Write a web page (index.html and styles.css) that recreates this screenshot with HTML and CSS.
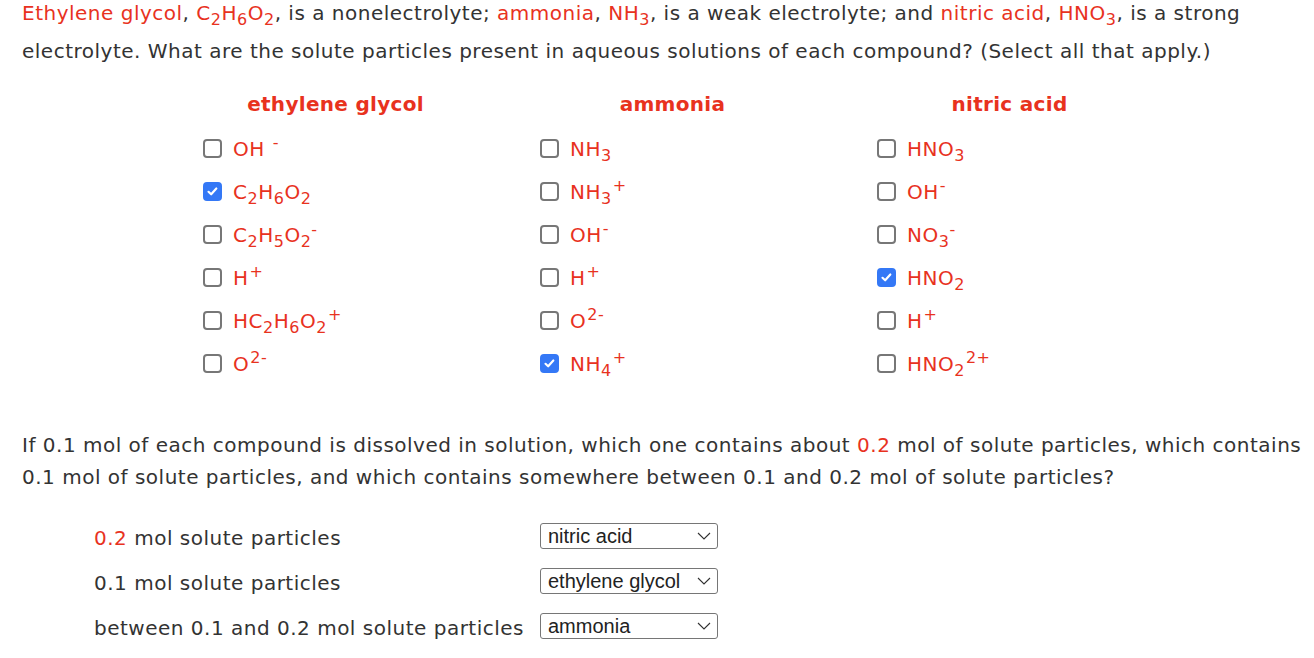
FILE: index.html
```html
<!DOCTYPE html>
<html>
<head>
<meta charset="utf-8">
<link rel="stylesheet" href="styles.css">
</head>
<body>
<p class="intro"><span class="red">Ethylene glycol</span>, <span class="red">C<sub>2</sub>H<sub>6</sub>O<sub>2</sub></span>, is a nonelectrolyte; <span class="red">ammonia</span>, <span class="red">NH<sub>3</sub></span>, is a weak electrolyte; and <span class="red">nitric acid</span>, <span class="red">HNO<sub>3</sub></span>, is a strong<br>electrolyte. What are the solute particles present in aqueous solutions of each compound? (Select all that apply.)</p>

<div class="columns">
  <div class="col">
    <div class="col-head">ethylene glycol</div>
    <div class="item"><span class="cb"></span><span class="label">OH <sup>-</sup></span></div>
    <div class="item"><span class="cb checked"><svg viewBox="0 0 18 18"><path d="M4.2 9.4 L7.4 12.4 L13.6 5.4" fill="none" stroke="#fff" stroke-width="2.6" stroke-linecap="round" stroke-linejoin="round"/></svg></span><span class="label">C<sub>2</sub>H<sub>6</sub>O<sub>2</sub></span></div>
    <div class="item"><span class="cb"></span><span class="label">C<sub>2</sub>H<sub>5</sub>O<sub>2</sub><sup class="tight">-</sup></span></div>
    <div class="item"><span class="cb"></span><span class="label">H<sup>+</sup></span></div>
    <div class="item"><span class="cb"></span><span class="label">HC<sub>2</sub>H<sub>6</sub>O<sub>2</sub><sup>+</sup></span></div>
    <div class="item"><span class="cb"></span><span class="label">O<sup>2-</sup></span></div>
  </div>
  <div class="col">
    <div class="col-head">ammonia</div>
    <div class="item"><span class="cb"></span><span class="label">NH<sub>3</sub></span></div>
    <div class="item"><span class="cb"></span><span class="label">NH<sub>3</sub><sup>+</sup></span></div>
    <div class="item"><span class="cb"></span><span class="label">OH<sup>-</sup></span></div>
    <div class="item"><span class="cb"></span><span class="label">H<sup>+</sup></span></div>
    <div class="item"><span class="cb"></span><span class="label">O<sup>2-</sup></span></div>
    <div class="item"><span class="cb checked"><svg viewBox="0 0 18 18"><path d="M4.2 9.4 L7.4 12.4 L13.6 5.4" fill="none" stroke="#fff" stroke-width="2.6" stroke-linecap="round" stroke-linejoin="round"/></svg></span><span class="label">NH<sub>4</sub><sup>+</sup></span></div>
  </div>
  <div class="col">
    <div class="col-head">nitric acid</div>
    <div class="item"><span class="cb"></span><span class="label">HNO<sub>3</sub></span></div>
    <div class="item"><span class="cb"></span><span class="label">OH<sup>-</sup></span></div>
    <div class="item"><span class="cb"></span><span class="label">NO<sub>3</sub><sup class="tight">-</sup></span></div>
    <div class="item"><span class="cb checked"><svg viewBox="0 0 18 18"><path d="M4.2 9.4 L7.4 12.4 L13.6 5.4" fill="none" stroke="#fff" stroke-width="2.6" stroke-linecap="round" stroke-linejoin="round"/></svg></span><span class="label">HNO<sub>2</sub></span></div>
    <div class="item"><span class="cb"></span><span class="label">H<sup>+</sup></span></div>
    <div class="item"><span class="cb"></span><span class="label">HNO<sub>2</sub><sup>2+</sup></span></div>
  </div>
</div>

<p class="question">If 0.1 mol of each compound is dissolved in solution, which one contains about <span class="red">0.2</span> mol of solute particles, which contains<br>0.1 mol of solute particles, and which contains somewhere between 0.1 and 0.2 mol of solute particles?</p>

<div class="answers">
  <div class="ans-label"><span class="red">0.2</span> mol solute particles</div>
  <div class="sel"><span class="sel-text">nitric acid</span><svg class="chev" viewBox="0 0 14 8"><path d="M1 1 L7 7 L13 1" fill="none" stroke="#333" stroke-width="1.1"/></svg></div>
  <div class="ans-label">0.1 mol solute particles</div>
  <div class="sel"><span class="sel-text">ethylene glycol</span><svg class="chev" viewBox="0 0 14 8"><path d="M1 1 L7 7 L13 1" fill="none" stroke="#333" stroke-width="1.1"/></svg></div>
  <div class="ans-label">between 0.1 and 0.2 mol solute particles</div>
  <div class="sel"><span class="sel-text">ammonia</span><svg class="chev" viewBox="0 0 14 8"><path d="M1 1 L7 7 L13 1" fill="none" stroke="#333" stroke-width="1.1"/></svg></div>
</div>
</body>
</html>
```

FILE: styles.css
```css
html, body {
  margin: 0;
  padding: 0;
  background: #fff;
}
body {
  font-family: "DejaVu Sans", Verdana, sans-serif;
  font-size: 20px;
  letter-spacing: 0.5px;
  color: #333;
}
.red {
  color: #e8321e;
}
sub, sup {
  font-size: 0.8em;
  line-height: 0;
}
sub {
  vertical-align: -0.3em;
}
sup {
  vertical-align: 0.45em;
  margin-left: 1px;
}
sup.tight {
  margin-left: 0;
}
.intro {
  margin: -6px 0 0 0;
  padding-left: 22px;
  line-height: 38px;
  white-space: nowrap;
}
.columns {
  display: grid;
  grid-template-columns: 337px 337px 337px;
  margin-left: 167px;
  margin-top: 19px;
}
.col-head {
  text-align: center;
  font-weight: bold;
  letter-spacing: 0.3px;
  color: #e8321e;
  line-height: 30px;
  height: 30px;
  margin-bottom: 8px;
}
.item {
  display: flex;
  align-items: center;
  height: 43px;
  padding-left: 36px;
}
.cb {
  box-sizing: border-box;
  width: 19px;
  height: 19px;
  border: 2px solid #777;
  border-radius: 4px;
  background: #fff;
  margin-right: 11px;
  flex: none;
  display: flex;
}
.cb.checked {
  background: #3478f6;
  border-color: #3478f6;
}
.cb svg {
  width: 100%;
  height: 100%;
}
.label {
  color: #e8321e;
  line-height: 24px;
}
.question {
  margin: 44px 0 0 0;
  padding-left: 22px;
  line-height: 32px;
  white-space: nowrap;
}
.answers {
  display: grid;
  grid-template-columns: 446px 178px;
  grid-auto-rows: 45px;
  align-items: center;
  margin-top: 22px;
  padding-left: 94px;
}
.sel {
  position: relative;
  top: -2px;
  box-sizing: border-box;
  height: 26px;
  width: 178px;
  border: 1px solid #767676;
  border-radius: 3px;
  font-family: "Liberation Sans", Arial, sans-serif;
  font-size: 20px;
  letter-spacing: 0;
  color: #222;
  line-height: 24px;
  padding-left: 7px;
  white-space: nowrap;
  overflow: hidden;
}
.chev {
  position: absolute;
  right: 6px;
  top: 8px;
  width: 14px;
  height: 8px;
  background: #fff;
}
```
